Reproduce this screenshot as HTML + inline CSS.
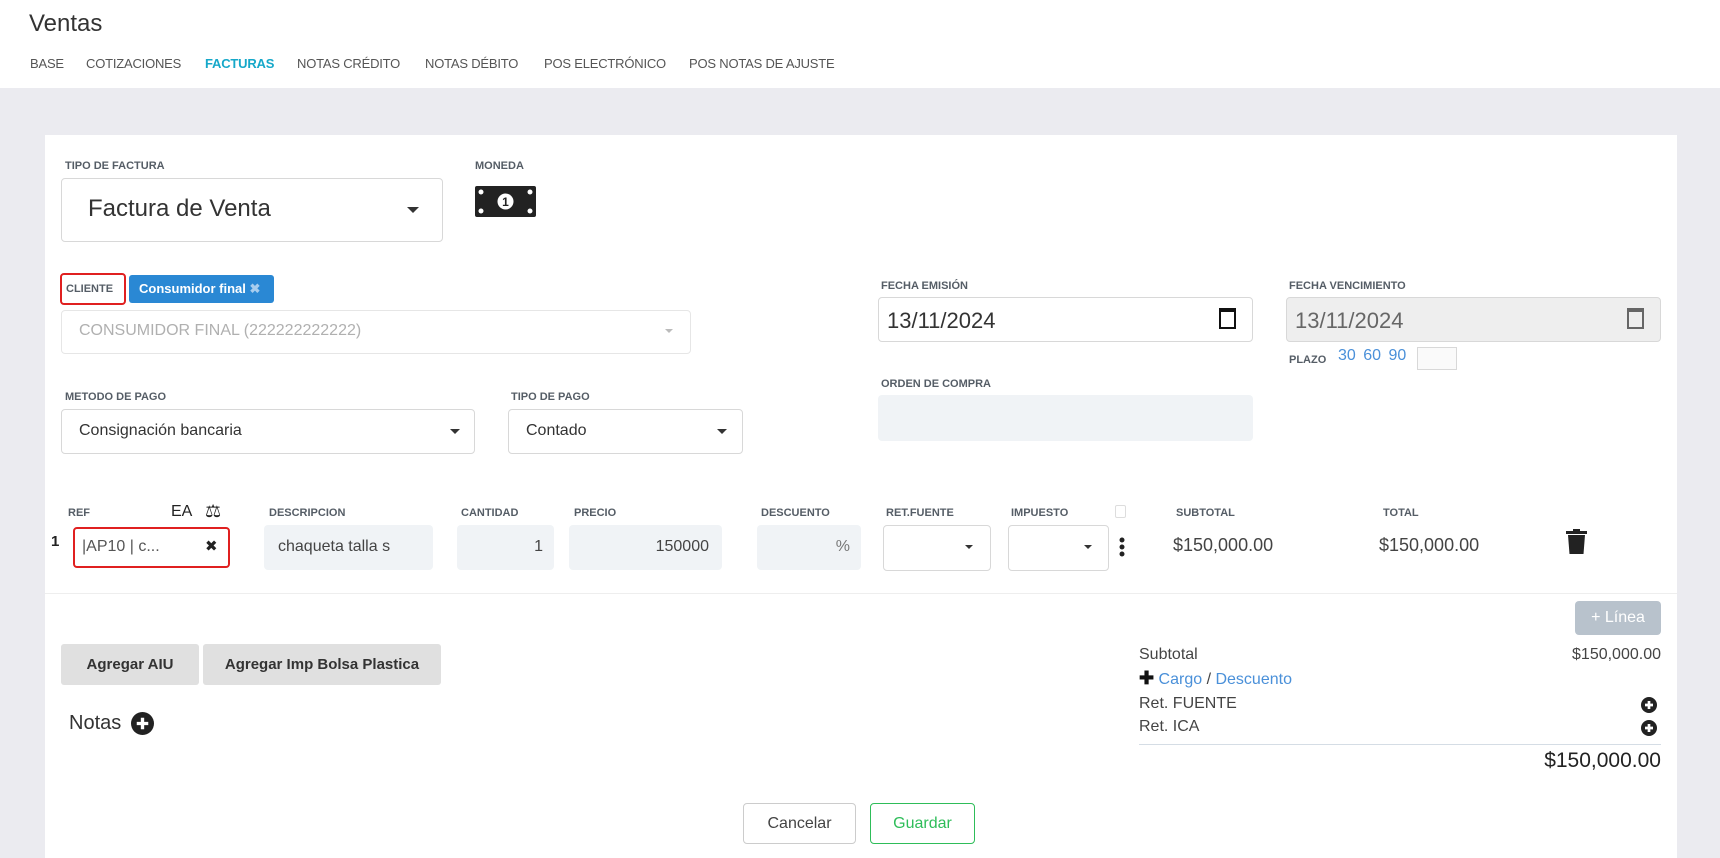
<!DOCTYPE html>
<html><head><meta charset="utf-8"><style>
*{box-sizing:border-box;margin:0;padding:0}
body{width:1720px;height:858px;overflow:hidden;font-family:"Liberation Sans",sans-serif;background:#fff;position:relative;color:#333}
.a{position:absolute}
.lbl{position:absolute;font-size:11px;font-weight:bold;color:#555d66;letter-spacing:0}
.box{position:absolute;border:1px solid #d8d8d8;border-radius:4px;background:#fff}
.gray{position:absolute;background:#f0f3f6;border-radius:4px}
.caret{position:absolute;width:0;height:0;border-left:5px solid transparent;border-right:5px solid transparent;border-top:5px solid #333}
.nav span{position:absolute;top:56px;font-size:13px;color:#555;letter-spacing:-0.2px}
</style></head><body>
<div class="a" style="left:29px;top:10px;font-size:24px;color:#333">Ventas</div>
<div class="nav">
<span style="left:30px">BASE</span><span style="left:86px">COTIZACIONES</span>
<span style="left:205px;color:#16a8c9;font-weight:bold">FACTURAS</span>
<span style="left:297px">NOTAS CRÉDITO</span><span style="left:425px">NOTAS DÉBITO</span>
<span style="left:544px">POS ELECTRÓNICO</span><span style="left:689px">POS NOTAS DE AJUSTE</span>
</div>
<div class="a" style="left:0;top:88px;width:1720px;height:770px;background:#ebebf0"></div>
<div class="a" style="left:45px;top:135px;width:1632px;height:723px;background:#fff"></div>

<div class="lbl" style="left:65px;top:160px">TIPO DE FACTURA</div>
<div class="box" style="left:61px;top:178px;width:382px;height:64px"></div>
<div class="a" style="left:88px;top:195px;font-size:24px;color:#333">Factura de Venta</div>
<div class="caret" style="left:407px;top:207px;border-width:6px 6px 0 6px"></div>
<div class="lbl" style="left:475px;top:160px">MONEDA</div>
<svg class="a" style="left:475px;top:186px" width="61" height="31" viewBox="0 0 61 31"><rect width="61" height="31" rx="2" fill="#222"/><circle cx="30.5" cy="15.5" r="8" fill="#fff"/><text x="30.5" y="20" font-size="12" font-weight="bold" text-anchor="middle" fill="#222" font-family="Liberation Sans">1</text><g fill="#fff"><circle cx="6" cy="6" r="2.5"/><circle cx="55" cy="6" r="2.5"/><circle cx="6" cy="25" r="2.5"/><circle cx="55" cy="25" r="2.5"/></g></svg>

<div class="a" style="left:60px;top:273px;width:66px;height:32px;border:2px solid #e02020;border-radius:4px"></div>
<div class="lbl" style="left:66px;top:283px">CLIENTE</div>
<div class="a" style="left:129px;top:275px;width:145px;height:28px;background:#2a88d4;border-radius:3px;color:#fff;font-weight:bold;font-size:13px;padding:6px 10px">Consumidor final <span style="color:#a8cdee">✖</span></div>
<div class="box" style="left:61px;top:310px;width:630px;height:44px;border-color:#e6e6e6"></div>
<div class="a" style="left:79px;top:322px;font-size:16px;color:#b0b0b0">CONSUMIDOR FINAL (222222222222)</div>
<div class="caret" style="left:665px;top:329px;border-top-color:#bbb;border-width:4px 4px 0 4px"></div>

<div class="lbl" style="left:881px;top:280px">FECHA EMISIÓN</div>
<div class="box" style="left:878px;top:297px;width:375px;height:45px"></div>
<div class="a" style="left:887px;top:308px;font-size:22px;color:#333">13/11/2024</div>
<div class="a" style="left:1219px;top:308px;width:17px;height:21px;border:2px solid #111;border-top-width:4px"></div>
<div class="lbl" style="left:1289px;top:280px">FECHA VENCIMIENTO</div>
<div class="box" style="left:1286px;top:297px;width:375px;height:45px;background:#eeeeee"></div>
<div class="a" style="left:1295px;top:308px;font-size:22px;color:#666">13/11/2024</div>
<div class="a" style="left:1627px;top:308px;width:17px;height:21px;border:2px solid #666;border-top-width:4px"></div>
<div class="lbl" style="left:1289px;top:354px">PLAZO</div>
<div class="a" style="left:1338px;top:347px;font-size:16px;color:#4a90d9;word-spacing:3px">30 60 90</div>
<div class="box" style="left:1417px;top:347px;width:40px;height:23px;border-radius:0;background:#fafafa"></div>
<div class="lbl" style="left:881px;top:378px">ORDEN DE COMPRA</div>
<div class="gray" style="left:878px;top:395px;width:375px;height:46px"></div>

<div class="lbl" style="left:65px;top:391px">METODO DE PAGO</div>
<div class="box" style="left:61px;top:409px;width:414px;height:45px"></div>
<div class="a" style="left:79px;top:422px;font-size:16px;color:#333">Consignación bancaria</div>
<div class="caret" style="left:450px;top:429px"></div>
<div class="lbl" style="left:511px;top:391px">TIPO DE PAGO</div>
<div class="box" style="left:508px;top:409px;width:235px;height:45px"></div>
<div class="a" style="left:526px;top:422px;font-size:16px;color:#333">Contado</div>
<div class="caret" style="left:717px;top:429px"></div>

<div class="lbl" style="left:68px;top:507px">REF</div>
<div class="a" style="left:171px;top:503px;font-size:16px;color:#222">EA</div>
<div class="a" style="left:205px;top:501px;font-size:18px;color:#222">⚖</div>
<div class="lbl" style="left:269px;top:507px">DESCRIPCION</div>
<div class="lbl" style="left:461px;top:507px">CANTIDAD</div>
<div class="lbl" style="left:574px;top:507px">PRECIO</div>
<div class="lbl" style="left:761px;top:507px">DESCUENTO</div>
<div class="lbl" style="left:886px;top:507px">RET.FUENTE</div>
<div class="lbl" style="left:1011px;top:507px">IMPUESTO</div>
<div class="a" style="left:1115px;top:505px;width:11px;height:13px;border:1px solid #ddd;border-radius:2px"></div>
<div class="lbl" style="left:1176px;top:507px">SUBTOTAL</div>
<div class="lbl" style="left:1383px;top:507px">TOTAL</div>

<div class="a" style="left:51px;top:533px;font-size:15px;font-weight:bold;color:#222">1</div>
<div class="a" style="left:73px;top:527px;width:157px;height:41px;border:2px solid #e02020;border-radius:4px;background:#fff"></div>
<div class="a" style="left:82px;top:538px;font-size:16px;color:#555">|AP10 | c...</div>
<div class="a" style="left:205px;top:537px;font-size:15px;color:#222">✖</div>
<div class="gray" style="left:264px;top:525px;width:169px;height:45px"></div>
<div class="a" style="left:278px;top:538px;font-size:16px;color:#444">chaqueta talla s</div>
<div class="gray" style="left:457px;top:525px;width:97px;height:45px"></div>
<div class="a" style="left:457px;top:538px;width:86px;text-align:right;font-size:16px;color:#444">1</div>
<div class="gray" style="left:569px;top:525px;width:153px;height:45px"></div>
<div class="a" style="left:569px;top:538px;width:140px;text-align:right;font-size:16px;color:#444">150000</div>
<div class="gray" style="left:757px;top:525px;width:104px;height:45px"></div>
<div class="a" style="left:757px;top:538px;width:93px;text-align:right;font-size:16px;color:#777">%</div>
<div class="box" style="left:883px;top:525px;width:108px;height:46px"></div>
<div class="caret" style="left:965px;top:545px;border-width:4px 4px 0 4px"></div>
<div class="box" style="left:1008px;top:525px;width:101px;height:46px"></div>
<div class="caret" style="left:1084px;top:545px;border-width:4px 4px 0 4px"></div>
<svg class="a" style="left:1119px;top:537px" width="6" height="20"><circle cx="3" cy="3" r="2.5" fill="#222"/><circle cx="3" cy="10" r="2.5" fill="#222"/><circle cx="3" cy="17" r="2.5" fill="#222"/></svg>
<div class="a" style="left:1173px;top:535px;font-size:18px;color:#444">$150,000.00</div>
<div class="a" style="left:1379px;top:535px;font-size:18px;color:#444">$150,000.00</div>
<svg class="a" style="left:1566px;top:529px" width="21" height="25" viewBox="0 0 21 25"><path d="M7 0h7v2h7v3H0V2h7z" fill="#222"/><path d="M2 6h17l-1.5 19h-14z" fill="#222"/></svg>

<div class="a" style="left:45px;top:593px;width:1632px;height:1px;background:#eeeeee"></div>
<div class="a" style="left:1575px;top:601px;width:86px;height:34px;background:#b8c2cc;border-radius:4px;color:#fff;font-size:16px;text-align:center;line-height:34px">+ Línea</div>

<div class="a" style="left:61px;top:644px;width:138px;height:41px;background:#e0e0e0;border-radius:3px;font-weight:bold;font-size:15px;color:#333;text-align:center;line-height:41px">Agregar AIU</div>
<div class="a" style="left:203px;top:644px;width:238px;height:41px;background:#e0e0e0;border-radius:3px;font-weight:bold;font-size:15px;color:#333;text-align:center;line-height:41px">Agregar Imp Bolsa Plastica</div>
<div class="a" style="left:69px;top:712px;font-size:20px;color:#333">Notas</div>
<svg class="a" style="left:131px;top:712px" width="23" height="23" viewBox="0 0 24 24"><circle cx="12" cy="12" r="12" fill="#222"/><path d="M12 6v12M6 12h12" stroke="#fff" stroke-width="3.5"/></svg>

<div class="a" style="left:1139px;top:646px;font-size:16px;color:#444">Subtotal</div>
<div class="a" style="left:1461px;top:646px;width:200px;text-align:right;font-size:16px;color:#444">$150,000.00</div>
<div class="a" style="left:1139px;top:668px;font-size:16px;color:#444"><b style="color:#111;font-size:18px">✚</b> <span style="color:#4a90d9">Cargo</span> / <span style="color:#4a90d9">Descuento</span></div>
<div class="a" style="left:1139px;top:695px;font-size:16px;color:#444">Ret. FUENTE</div>
<div class="a" style="left:1139px;top:718px;font-size:16px;color:#444">Ret. ICA</div>
<svg class="a" style="left:1641px;top:697px" width="16" height="16" viewBox="0 0 24 24"><circle cx="12" cy="12" r="12" fill="#222"/><path d="M12 6v12M6 12h12" stroke="#fff" stroke-width="4"/></svg>
<svg class="a" style="left:1641px;top:720px" width="16" height="16" viewBox="0 0 24 24"><circle cx="12" cy="12" r="12" fill="#222"/><path d="M12 6v12M6 12h12" stroke="#fff" stroke-width="4"/></svg>
<div class="a" style="left:1139px;top:744px;width:522px;height:1px;background:#d5dde5"></div>
<div class="a" style="left:1361px;top:749px;width:300px;text-align:right;font-size:21px;color:#222">$150,000.00</div>

<div class="a" style="left:743px;top:803px;width:113px;height:41px;border:1px solid #ccc;border-radius:4px;text-align:center;line-height:39px;font-size:16px;color:#444">Cancelar</div>
<div class="a" style="left:870px;top:803px;width:105px;height:41px;border:1px solid #2ebd59;border-radius:4px;text-align:center;line-height:39px;font-size:16px;color:#2ebd59">Guardar</div>
</body></html>
